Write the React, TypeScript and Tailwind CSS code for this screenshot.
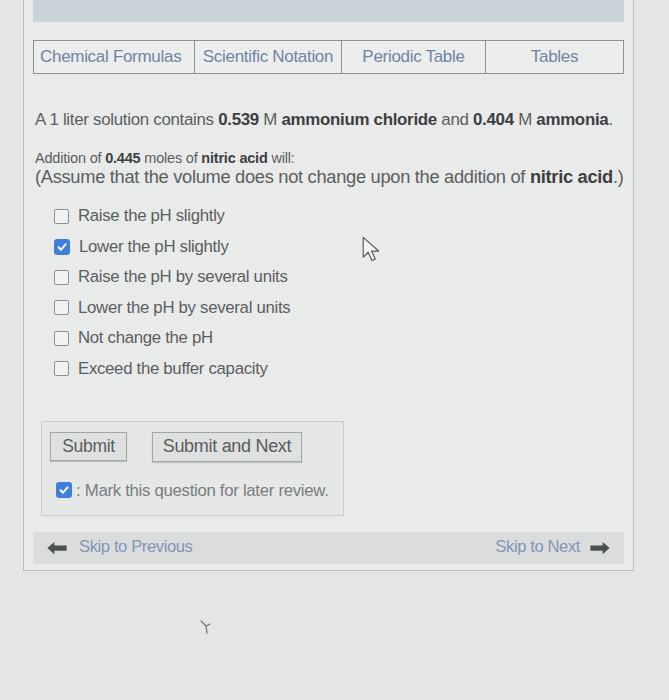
import React from "react"

const options = [
  { label: "Raise the pH slightly", checked: false },
  { label: "Lower the pH slightly", checked: true },
  { label: "Raise the pH by several units", checked: false },
  { label: "Lower the pH by several units", checked: false },
  { label: "Not change the pH", checked: false },
  { label: "Exceed the buffer capacity", checked: false },
]

const tabs = [
  { label: "Chemical Formulas", w: "w-[160px]", align: "justify-start pl-[6px]" },
  { label: "Scientific Notation", w: "w-[147px]", align: "justify-center" },
  { label: "Periodic Table", w: "w-[144px]", align: "justify-center" },
  { label: "Tables", w: "flex-1", align: "justify-center" },
]

function Box({ checked }: { checked: boolean }) {
  if (checked) {
    return (
      <span className="flex h-[16px] w-[16px] items-center justify-center rounded-[3px] bg-[#3f7fd9]">
        <svg viewBox="0 0 12 12" className="h-[12px] w-[12px]">
          <path d="M2.5 6.3 L5 8.7 L9.6 3.4" fill="none" stroke="#fff" strokeWidth="2" strokeLinecap="round" strokeLinejoin="round" />
        </svg>
      </span>
    )
  }
  return <span className="block h-[15px] w-[15px] rounded-[2px] border border-[#8d9190] bg-[#f1f2f1]" />
}

function Arrow({ dir }: { dir: "left" | "right" }) {
  return (
    <svg viewBox="0 0 24 16" className={`h-[14px] w-[24px] ${dir === "left" ? "" : "rotate-180"}`}>
      <path d="M1 8 L9 1 L9 5 L23 5 L23 11 L9 11 L9 15 Z" fill="#4d5051" />
    </svg>
  )
}

export default function App() {
  return (
    <div className="relative min-h-[700px] bg-[#e4e6e5] font-['Liberation_Sans',Arial,sans-serif] text-[#5b5e60]">
      <div className="ml-[23px] w-[611px] border-x border-b border-[#b9bdbc] bg-[#e9ebea] px-[9px] pb-[6px]">
        <div className="h-[22px] bg-[#c8d3d8]" />

        {/* Tool tabs */}
        <div className="mt-[18px] flex h-[34px] border border-[#8e9292] bg-[#eceeed]">
          {tabs.map((t, i) => (
            <div
              key={t.label}
              className={`flex items-center ${t.w} ${t.align} ${i > 0 ? "border-l border-[#8e9292]" : ""} text-[17px] tracking-[-0.3px] text-[#6f84a6]`}
            >
              {t.label}
            </div>
          ))}
        </div>

        {/* Question */}
        <div className="mt-[36px] pl-[2px]">
          <p className="text-[16.9px] leading-[20px] tracking-[-0.3px]">
            A 1 liter solution contains <b className="text-[#3d4042]">0.539</b> M{" "}
            <b className="text-[#3d4042]">ammonium chloride</b> and <b className="text-[#3d4042]">0.404</b> M{" "}
            <b className="text-[#3d4042]">ammonia</b>.
          </p>
          <p className="mt-[19px] text-[14.5px] leading-[18px] tracking-[-0.2px]">
            Addition of <b className="text-[#3d4042]">0.445</b> moles of <b className="text-[#3d4042]">nitric acid</b> will:
          </p>
          <p className="text-[18.3px] leading-[19px] tracking-[-0.3px]">
            (Assume that the volume does not change upon the addition of <b className="text-[#3d4042]">nitric acid</b>.)
          </p>
        </div>

        {/* Options */}
        <div className="mt-[21px] flex flex-col gap-[12.5px] pl-[21px]">
          {options.map((o) => (
            <div key={o.label} className="flex h-[18px] items-center gap-[9px]">
              <Box checked={o.checked} />
              <span className="text-[16.8px] tracking-[-0.3px]">{o.label}</span>
            </div>
          ))}
        </div>

        {/* Submit box */}
        <div className="mt-[43px] ml-[8px] w-[303px] border border-[#c9cccb] bg-[#e6e8e7] px-[8px] pt-[10px] pb-[12px]">
          <div className="flex items-center gap-[25px]">
            <button className="h-[29px] w-[77px] border border-[#a2a6a5] bg-[#dfe1e0] text-[17.5px] tracking-[-0.3px] text-[#595c5e] shadow-[0_1px_1px_#c0c3c2]">
              Submit
            </button>
            <button className="h-[30px] w-[150px] border border-[#a2a6a5] bg-[#dfe1e0] text-[18px] tracking-[-0.3px] text-[#595c5e] shadow-[0_1px_1px_#c0c3c2]">
              Submit and Next
            </button>
          </div>
          <div className="mt-[16px] flex items-center gap-[4px] pl-[6px]">
            <Box checked />
            <span className="text-[16.8px] tracking-[-0.3px] text-[#7a7d7f]">: Mark this question for later review.</span>
          </div>
        </div>

        {/* Skip nav */}
        <div className="mt-[16px] flex h-[32px] items-center justify-between bg-[#dbdddc] pl-[12px] pr-[12px]">
          <div className="flex items-center gap-[10px]">
            <Arrow dir="left" />
            <span className="text-[16.6px] tracking-[-0.4px] text-[#8296b6]">Skip to Previous</span>
          </div>
          <div className="flex items-center gap-[8px]">
            <span className="text-[16.6px] tracking-[-0.4px] text-[#8296b6]">Skip to Next</span>
            <Arrow dir="right" />
          </div>
        </div>
      </div>

      {/* Mouse pointer */}
      <svg viewBox="0 0 20 26" className="absolute left-[361px] top-[235px] h-[29px] w-[22px]">
        <path d="M2 2 L2 20 L6.5 15.5 L10 23 L13 21.6 L9.6 14.4 L16 14.4 Z" fill="#f3f4f3" stroke="#5a5d5e" strokeWidth="1.1" strokeLinejoin="round" />
      </svg>

      {/* Stray mark */}
      <svg viewBox="0 0 12 16" className="absolute left-[200px] top-[619px] h-[16px] w-[12px]">
        <path d="M1 2 L6 7 L10 5 M6 7 L7 14" fill="none" stroke="#6b6e6f" strokeWidth="1.2" strokeLinecap="round" />
      </svg>
    </div>
  )
}
